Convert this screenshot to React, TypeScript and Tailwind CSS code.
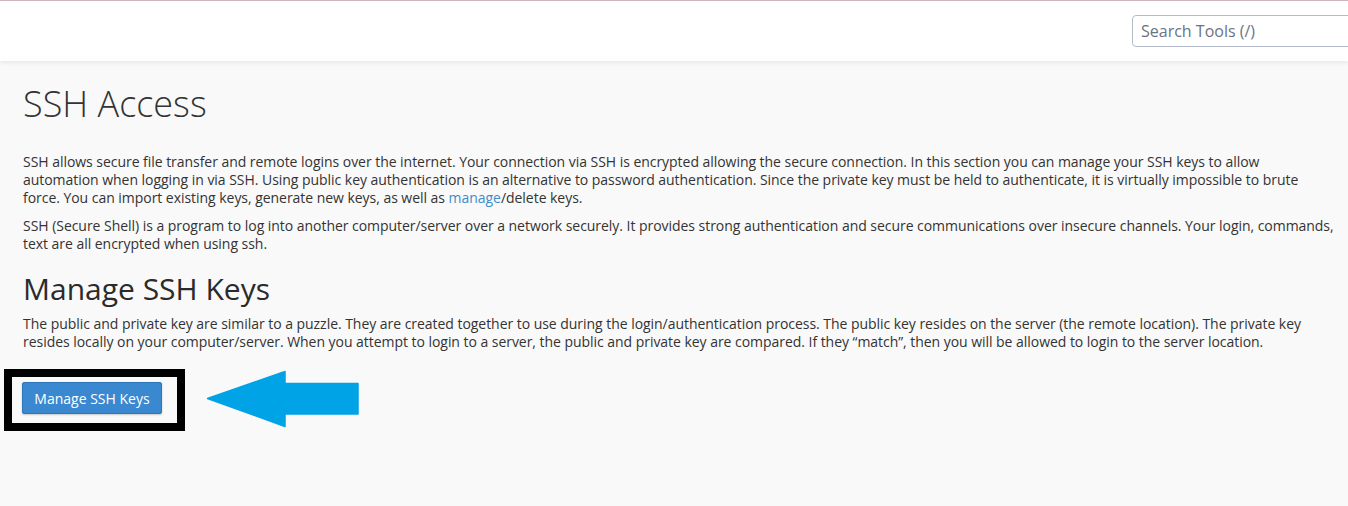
import React from "react";

export default function App() {
  return (
    <div
      className="min-h-[506px] bg-[#f9f9f9] text-[#333]"
      style={{ fontFamily: '"Open Sans", "Liberation Sans", sans-serif' }}
    >
      <header className="relative z-10 flex h-[61px] items-center justify-end overflow-hidden border-t border-[#cdb4c0] bg-white shadow-[0_2px_4px_rgba(0,0,0,0.07)]">
        <input
          type="text"
          placeholder="Search Tools (/)"
          className="mr-[-40px] h-[32px] w-[256px] shrink-0 rounded-[4px] border border-[#b3bbca] bg-white px-[8px] text-[16px] text-[#333] placeholder:text-[#6c737f] outline-none"
        />
      </header>

      <main className="pl-[23px] pr-[12px]">
        <h1 className="mt-[23px] text-[36px] font-light leading-[40px] text-[#333]">
          SSH Access
        </h1>

        <p className="mt-[29px] text-[14px] leading-[18px] tracking-[-0.04px]">
          SSH allows secure file transfer and remote logins over the internet. Your connection via SSH is encrypted allowing the secure connection. In this section you can manage your SSH keys to allow automation when logging in via SSH. Using public key authentication is an alternative to password authentication. Since the private key must be held to authenticate, it is virtually impossible to brute force. You can import existing keys, generate new keys, as well as{" "}
          <a href="#" className="text-[#428bca]">
            manage
          </a>
          /delete keys.
        </p>

        <p className="mt-[10px] text-[14px] leading-[18px] tracking-[-0.04px]">
          SSH (Secure Shell) is a program to log into another computer/server over a network securely. It provides strong authentication and secure communications over insecure channels. Your login, commands, text are all encrypted when using ssh.
        </p>

        <h2 className="mt-[19px] text-[30px] font-normal leading-[33px] text-[#2b2b2b]">
          Manage SSH Keys
        </h2>

        <p className="mt-[10px] text-[14px] leading-[18px] tracking-[-0.04px]">
          The public and private key are similar to a puzzle. They are created together to use during the login/authentication process. The public key resides on the server (the remote location). The private key resides locally on your computer/server. When you attempt to login to a server, the public and private key are compared. If they “match”, then you will be allowed to login to the server location.
        </p>

        <div className="mt-[18px] ml-[-19px] flex items-start gap-[21px]">
          <div className="border-[8px] border-black pt-[5px] pb-[9px] pl-[10px] pr-[15px]">
            <button
              type="button"
              className="flex h-[32px] w-[140px] items-center justify-center rounded-[2px] border border-[#2f76b9] bg-[#3a88cf] text-[14px] text-white shadow-[0_1px_2px_rgba(0,0,0,0.2)]"
            >
              Manage SSH Keys
            </button>
          </div>
          <svg
            width="154"
            height="58"
            viewBox="0 0 154 58"
            className="mt-[1px]"
            aria-hidden="true"
          >
            <polygon
              points="1.5,28.5 79,1.5 79,13.5 152,13.5 152,44 79,44 79,56.5"
              fill="#00a3e6"
              stroke="#00a3e6"
              strokeWidth="1.5"
              strokeLinejoin="round"
            />
          </svg>
        </div>
      </main>
    </div>
  );
}
